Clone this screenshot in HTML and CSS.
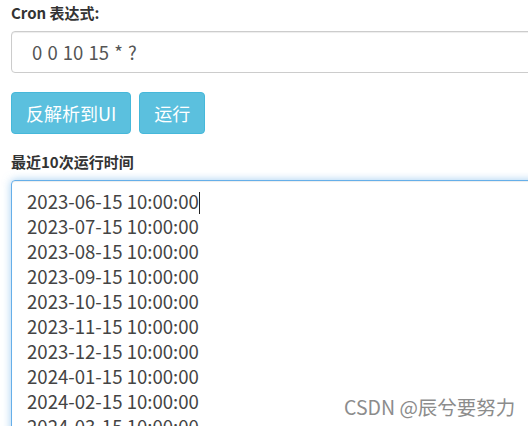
FILE: index.html
```html
<!DOCTYPE html>
<html lang="zh-CN">
<head>
<meta charset="utf-8">
<title>Cron</title>
<link rel="stylesheet" href="styles.css">
</head>
<body>
<div class="page">
  <div class="field-label">Cron 表达式:</div>
  <div class="cron-input">0 0 10 15 * ?</div>
  <div class="actions">
    <button class="btn">反解析到UI</button>
    <button class="btn">运行</button>
  </div>
  <div class="field-label second">最近10次运行时间</div>
  <div class="result-box">
    <div class="line">2023-06-15 10:00:00<span class="caret"></span></div>
    <div class="line">2023-07-15 10:00:00</div>
    <div class="line">2023-08-15 10:00:00</div>
    <div class="line">2023-09-15 10:00:00</div>
    <div class="line">2023-10-15 10:00:00</div>
    <div class="line">2023-11-15 10:00:00</div>
    <div class="line">2023-12-15 10:00:00</div>
    <div class="line">2024-01-15 10:00:00</div>
    <div class="line">2024-02-15 10:00:00</div>
    <div class="line">2024-03-15 10:00:00</div>
  </div>
</div>
<div class="watermark">CSDN @辰兮要努力</div>
</body>
</html>
```
FILE: styles.css
```css
html, body {
  margin: 0;
  padding: 0;
  width: 528px;
  height: 426px;
  overflow: hidden;
  background: #fff;
}
body {
  position: relative;
  font-family: "Noto Sans CJK SC", "Noto Sans", sans-serif;
  color: #333;
}
.page {
  padding: 3px 0 0 11px;
  width: 620px;
}
.field-label {
  font-size: 15px;
  font-weight: bold;
  line-height: 20px;
  height: 20px;
  color: #333;
}
.field-label.second {
  margin-top: 18px;
}
.cron-input {
  margin-top: 8px;
  height: 42px;
  box-sizing: border-box;
  border: 1px solid #ccc;
  border-radius: 4px;
  padding-left: 20px;
  font-size: 18.5px;
  word-spacing: 1px;
  line-height: 40px;
  color: #555;
  box-shadow: inset 0 1px 1px rgba(0,0,0,.075);
}
.actions {
  display: flex;
  gap: 8px;
  margin-top: 19px;
}
.btn {
  height: 42px;
  padding: 0 14px;
  border: 1px solid #46b8da;
  border-radius: 4px;
  background: #5bc0de;
  color: #fff;
  font-family: inherit;
  font-size: 18px;
  line-height: 40px;
}
.result-box {
  margin-top: 8px;
  height: 300px;
  box-sizing: border-box;
  border: 1px solid #66afe9;
  border-radius: 4px;
  padding: 7px 0 0 15px;
  font-size: 18.6px;
  line-height: 25px;
  color: #444;
  box-shadow: inset 0 1px 1px rgba(0,0,0,.075), 0 0 8px rgba(102,175,233,.6);
}
.line {
  height: 25px;
  white-space: nowrap;
}
.caret {
  display: inline-block;
  width: 1px;
  height: 22px;
  background: #222;
  vertical-align: -5px;
}
.watermark {
  position: absolute;
  left: 344px;
  top: 394px;
  font-size: 19.5px;
  line-height: 26px;
  color: #8c8c8c;
  text-shadow: 1px 1px 0 rgba(255,255,255,.8);
  white-space: nowrap;
}
```
